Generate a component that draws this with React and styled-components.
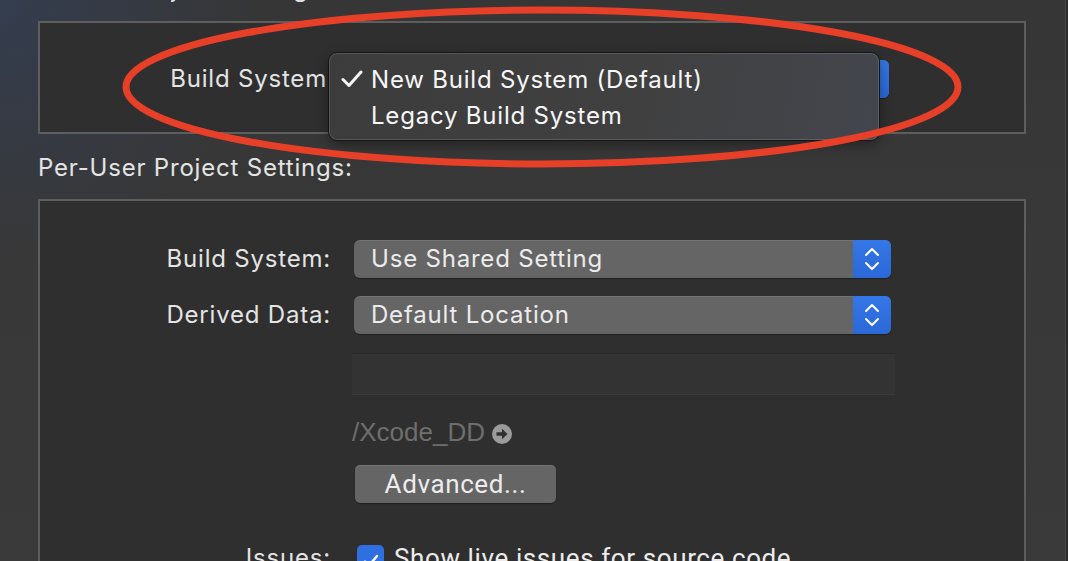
import React from 'react'
import styled, { createGlobalStyle } from 'styled-components'

const GlobalStyle = createGlobalStyle`
  html, body {
    margin: 0;
    padding: 0;
    background: #383838;
  }
  * { box-sizing: border-box; }
`

const Check = () => (
  <svg width="22" height="18" viewBox="0 0 22 18">
    <path d="M2 9.5 L8 15.5 L20 2" fill="none" stroke="#f4f4f4" strokeWidth="3" strokeLinecap="round" strokeLinejoin="round" />
  </svg>
)

const Chevrons = () => (
  <svg width="16" height="26" viewBox="0 0 16 26">
    <path d="M2 9 L8 3 L14 9" fill="none" stroke="#fff" strokeWidth="2" strokeLinecap="round" strokeLinejoin="round" />
    <path d="M2 17 L8 23 L14 17" fill="none" stroke="#fff" strokeWidth="2" strokeLinecap="round" strokeLinejoin="round" />
  </svg>
)

const RevealArrow = () => (
  <svg width="20" height="20" viewBox="0 0 20 20">
    <circle cx="10" cy="10" r="10" fill="#9b9b9b" />
    <path d="M4.5 8.3 H10 V4.8 L15.5 10 L10 15.2 V11.7 H4.5 Z" fill="#2f2f2f" />
  </svg>
)

const TickBox = () => (
  <svg width="16" height="14" viewBox="0 0 16 14">
    <path d="M2 7.5 L6 11.5 L14 2" fill="none" stroke="#fff" strokeWidth="2.4" strokeLinecap="round" strokeLinejoin="round" />
  </svg>
)

const App = () => {
  return (
    <>
      <GlobalStyle />
      <Screen>
        <Sheet>
          <SectionTitle $clipped>Shared Project Settings:</SectionTitle>
          <Box $height={113}>
            <SharedRow>
              <Label>Build System</Label>
              <PopUp>
                <PopUpText>New Build System (Default)</PopUpText>
                <Stepper><Chevrons /></Stepper>
              </PopUp>
            </SharedRow>
          </Box>

          <SectionTitle>Per-User Project Settings:</SectionTitle>
          <Box>
            <Form>
              <Label>Build System:</Label>
              <PopUp>
                <PopUpText>Use Shared Setting</PopUpText>
                <Stepper><Chevrons /></Stepper>
              </PopUp>

              <Label>Derived Data:</Label>
              <PopUp>
                <PopUpText>Default Location</PopUpText>
                <Stepper><Chevrons /></Stepper>
              </PopUp>

              <span />
              <PathField />

              <span />
              <PathLine>
                <span>/Xcode_DD</span>
                <RevealArrow />
              </PathLine>

              <span />
              <PushButton>Advanced...</PushButton>

              <Label $tall>Issues:</Label>
              <CheckRow>
                <CheckBox><TickBox /></CheckBox>
                <span>Show live issues for source code</span>
              </CheckRow>
            </Form>
          </Box>
        </Sheet>
        <WindowEdge />

        <Menu>
          <MenuItem>
            <Mark><Check /></Mark>
            New Build System (Default)
          </MenuItem>
          <MenuItem>
            <Mark />
            Legacy Build System
          </MenuItem>
        </Menu>

        <Annotation width="1068" height="561" viewBox="0 0 1068 561">
          <ellipse cx="542" cy="87" rx="416" ry="77" fill="none" stroke="#e83f28" strokeWidth="7" />
        </Annotation>
      </Screen>
    </>
  )
}

const Screen = styled.div`
  position: relative;
  width: 1068px;
  height: 561px;
  overflow: hidden;
  display: flex;
  background:
    radial-gradient(circle at 0 0, rgba(52, 62, 82, 0.9) 0, rgba(56, 56, 56, 0) 260px),
    linear-gradient(180deg, #363636, #3a3a3a);
  font-family: Inter, "Noto Sans", sans-serif;
  letter-spacing: 0.8px;
  color: #e6e6e6;
`

const Sheet = styled.div`
  flex: 1;
  display: flex;
  flex-direction: column;
  padding: 0 39px 0 38px;
`

const WindowEdge = styled.div`
  width: 3px;
  background: #2a2a2a;
  border-left: 1px solid #474747;
`

const SectionTitle = styled.div`
  flex: none;
  font-size: 24px;
  line-height: 26px;
  height: ${p => (p.$clipped ? '45px' : '65px')};
  margin-top: ${p => (p.$clipped ? '-24px' : '0')};
  padding-top: ${p => (p.$clipped ? '0' : '21px')};
  color: #e4e4e4;
  white-space: nowrap;
`

const Box = styled.div`
  border: 2px solid #5e5e5e;
  background: #2f2f2f;
  height: ${p => (p.$height ? `${p.$height}px` : 'auto')};
  flex: ${p => (p.$height ? 'none' : '1')};
`

const SharedRow = styled.div`
  display: grid;
  grid-template-columns: 287px 537px;
  column-gap: 25px;
  align-items: center;
  padding-top: 37px;
`

const Form = styled.div`
  display: grid;
  grid-template-columns: 291px 545px;
  column-gap: 23px;
  row-gap: 18px;
  align-items: center;
  padding-top: 39px;
`

const Label = styled.div`
  font-size: 24px;
  line-height: 34px;
  text-align: right;
  color: #e4e4e4;
  white-space: nowrap;
  margin-top: ${p => (p.$tall ? '20px' : '0')};
`

const PopUp = styled.div`
  display: flex;
  width: 537px;
  height: 38px;
  border-radius: 6px;
  overflow: hidden;
  background: #656565;
  box-shadow: inset 0 1px 0 rgba(255, 255, 255, 0.1), 0 1px 1px rgba(0, 0, 0, 0.35);
`

const PopUpText = styled.div`
  flex: 1;
  padding-left: 17px;
  font-size: 24px;
  line-height: 38px;
  color: #ececec;
  white-space: nowrap;
`

const Stepper = styled.div`
  width: 38px;
  display: flex;
  align-items: center;
  justify-content: center;
  background: linear-gradient(180deg, #3577e6, #2a68d6);
`

const PathField = styled.div`
  width: 543px;
  height: 42px;
  margin: 1px 0 0 -2px;
  background: #333333;
  border-top: 1px solid #2a2a2a;
  border-bottom: 1px solid #3b3b3b;
`

const PathLine = styled.div`
  display: flex;
  align-items: center;
  gap: 7px;
  height: 34px;
  padding-top: 4px;
  margin-left: -2px;
  font-family: "Liberation Sans", Arial, sans-serif;
  font-size: 26px;
  letter-spacing: 0;
  color: #6e6e6e;
  svg { margin-top: 4px; }
`

const PushButton = styled.div`
  width: 201px;
  height: 38px;
  margin-left: 1px;
  border-radius: 5px;
  background: #656565;
  box-shadow: inset 0 1px 0 rgba(255, 255, 255, 0.1), 0 1px 1px rgba(0, 0, 0, 0.35);
  font-family: Roboto, "Liberation Sans", sans-serif;
  font-size: 26px;
  letter-spacing: 0.6px;
  line-height: 38px;
  text-align: center;
  color: #ececec;
`

const CheckRow = styled.div`
  display: flex;
  align-items: center;
  gap: 10px;
  height: 34px;
  margin: 20px 0 0 3px;
  font-family: Roboto, "Liberation Sans", sans-serif;
  font-size: 26px;
  letter-spacing: 0.6px;
  color: #ececec;
  white-space: nowrap;
`

const CheckBox = styled.div`
  width: 27px;
  height: 27px;
  border-radius: 5px;
  background: #2f6fe0;
  display: flex;
  align-items: center;
  justify-content: center;
  padding-top: 6px;
`

const Menu = styled.div`
  position: absolute;
  left: 328px;
  top: 52px;
  width: 552px;
  height: 89px;
  padding-top: 8px;
  border-radius: 9px;
  border: 1px solid #151515;
  background: linear-gradient(100deg, #3c3c3c 0%, #404040 55%, #43464d 100%);
  box-shadow: inset 0 0 0 1px rgba(255, 255, 255, 0.14), 0 4px 12px rgba(0, 0, 0, 0.35);
  letter-spacing: 0.8px;
`

const MenuItem = styled.div`
  display: flex;
  align-items: center;
  height: 36px;
  font-size: 24px;
  color: #f7f7f7;
  white-space: nowrap;
`

const Mark = styled.div`
  width: 42px;
  display: flex;
  justify-content: center;
  padding-left: 4px;
`

const Annotation = styled.svg`
  position: absolute;
  left: 0;
  top: 0;
  pointer-events: none;
`

export default App
